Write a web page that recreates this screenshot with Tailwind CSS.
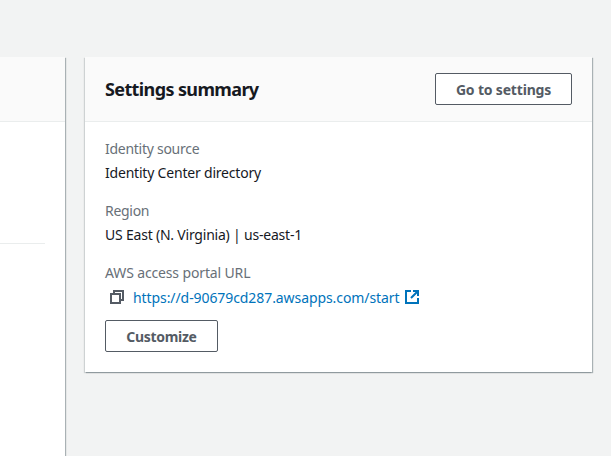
<!DOCTYPE html>
<html lang="en">
<head>
    <meta charset="UTF-8">
    <title>Settings summary</title>
    <script src="https://cdn.jsdelivr.net/npm/@tailwindcss/browser@4"></script>
</head>
<body class="h-[456px] overflow-hidden bg-[#f2f3f3] font-['Noto_Sans',sans-serif] text-[14px] text-[#16191f]">
    <div class="flex h-[456px] gap-[20px] pt-[57px] pr-[19px]">
        <!-- Left card, cut off by the window -->
        <div class="h-[399px] w-[65px] bg-white shadow-[1px_1px_1px_0_rgba(0,28,36,0.3)]">
            <div class="h-[65px] border-b border-[#eaeded] bg-[#fafafa]"></div>
            <div class="mt-[121px] h-px w-[45px] bg-[#eaeded]"></div>
        </div>

        <!-- Settings summary -->
        <div class="h-[315px] w-[507px] bg-white shadow-[1px_1px_1px_0_rgba(0,28,36,0.3),-1px_1px_1px_0_rgba(0,28,36,0.15)]">
            <div class="flex h-[65px] items-center justify-between border-b border-[#eaeded] bg-[#fafafa] px-[20px]">
                <h2 class="text-[18px] leading-[22px] font-bold tracking-[-0.62px]">Settings summary</h2>
                <button class="h-[32px] w-[137px] rounded-[2px] border border-[#545b64] bg-white text-[14px] font-bold tracking-[-0.18px] text-[#545b64]">Go to settings</button>
            </div>
            <div class="px-[20px] pt-[17px]">
                <div class="leading-[20px] tracking-[-0.27px] text-[#687078]">Identity source</div>
                <div class="mt-[4px] leading-[20px] tracking-[-0.2px]">Identity Center directory</div>
                <div class="mt-[18px] leading-[20px] tracking-[-0.3px] text-[#687078]">Region</div>
                <div class="mt-[4px] leading-[20px] tracking-[-0.21px]">US East (N. Virginia) | us-east-1</div>
                <div class="mt-[18px] leading-[20px] tracking-[-0.14px] text-[#687078]">AWS access portal URL</div>
                <div class="mt-[4px] flex h-[20px] items-center">
                    <svg class="ml-[5px] h-[14px] w-[14px] text-[#545b64]" viewBox="0 0 14 14" fill="none" stroke="currentColor" stroke-width="2">
                        <rect x="1" y="4" width="9" height="9"/>
                        <path d="M4 3V1h9v9h-2"/>
                    </svg>
                    <a href="#" class="ml-[9px] tracking-[-0.08px] text-[#0073bb]">https://d-90679cd287.awsapps.com/start</a>
                    <svg class="ml-[5px] h-[14px] w-[14px] text-[#0073bb]" viewBox="0 0 14 14" fill="none" stroke="currentColor" stroke-width="2">
                        <path d="M6 1H1v12h12V8"/>
                        <path d="M8 1h5v5M13 1 6 8"/>
                    </svg>
                </div>
                <button class="mt-[13px] h-[32px] w-[113px] rounded-[2px] border border-[#545b64] bg-white text-[14px] font-bold tracking-[-0.3px] text-[#545b64]">Customize</button>
            </div>
        </div>
    </div>
</body>
</html>
